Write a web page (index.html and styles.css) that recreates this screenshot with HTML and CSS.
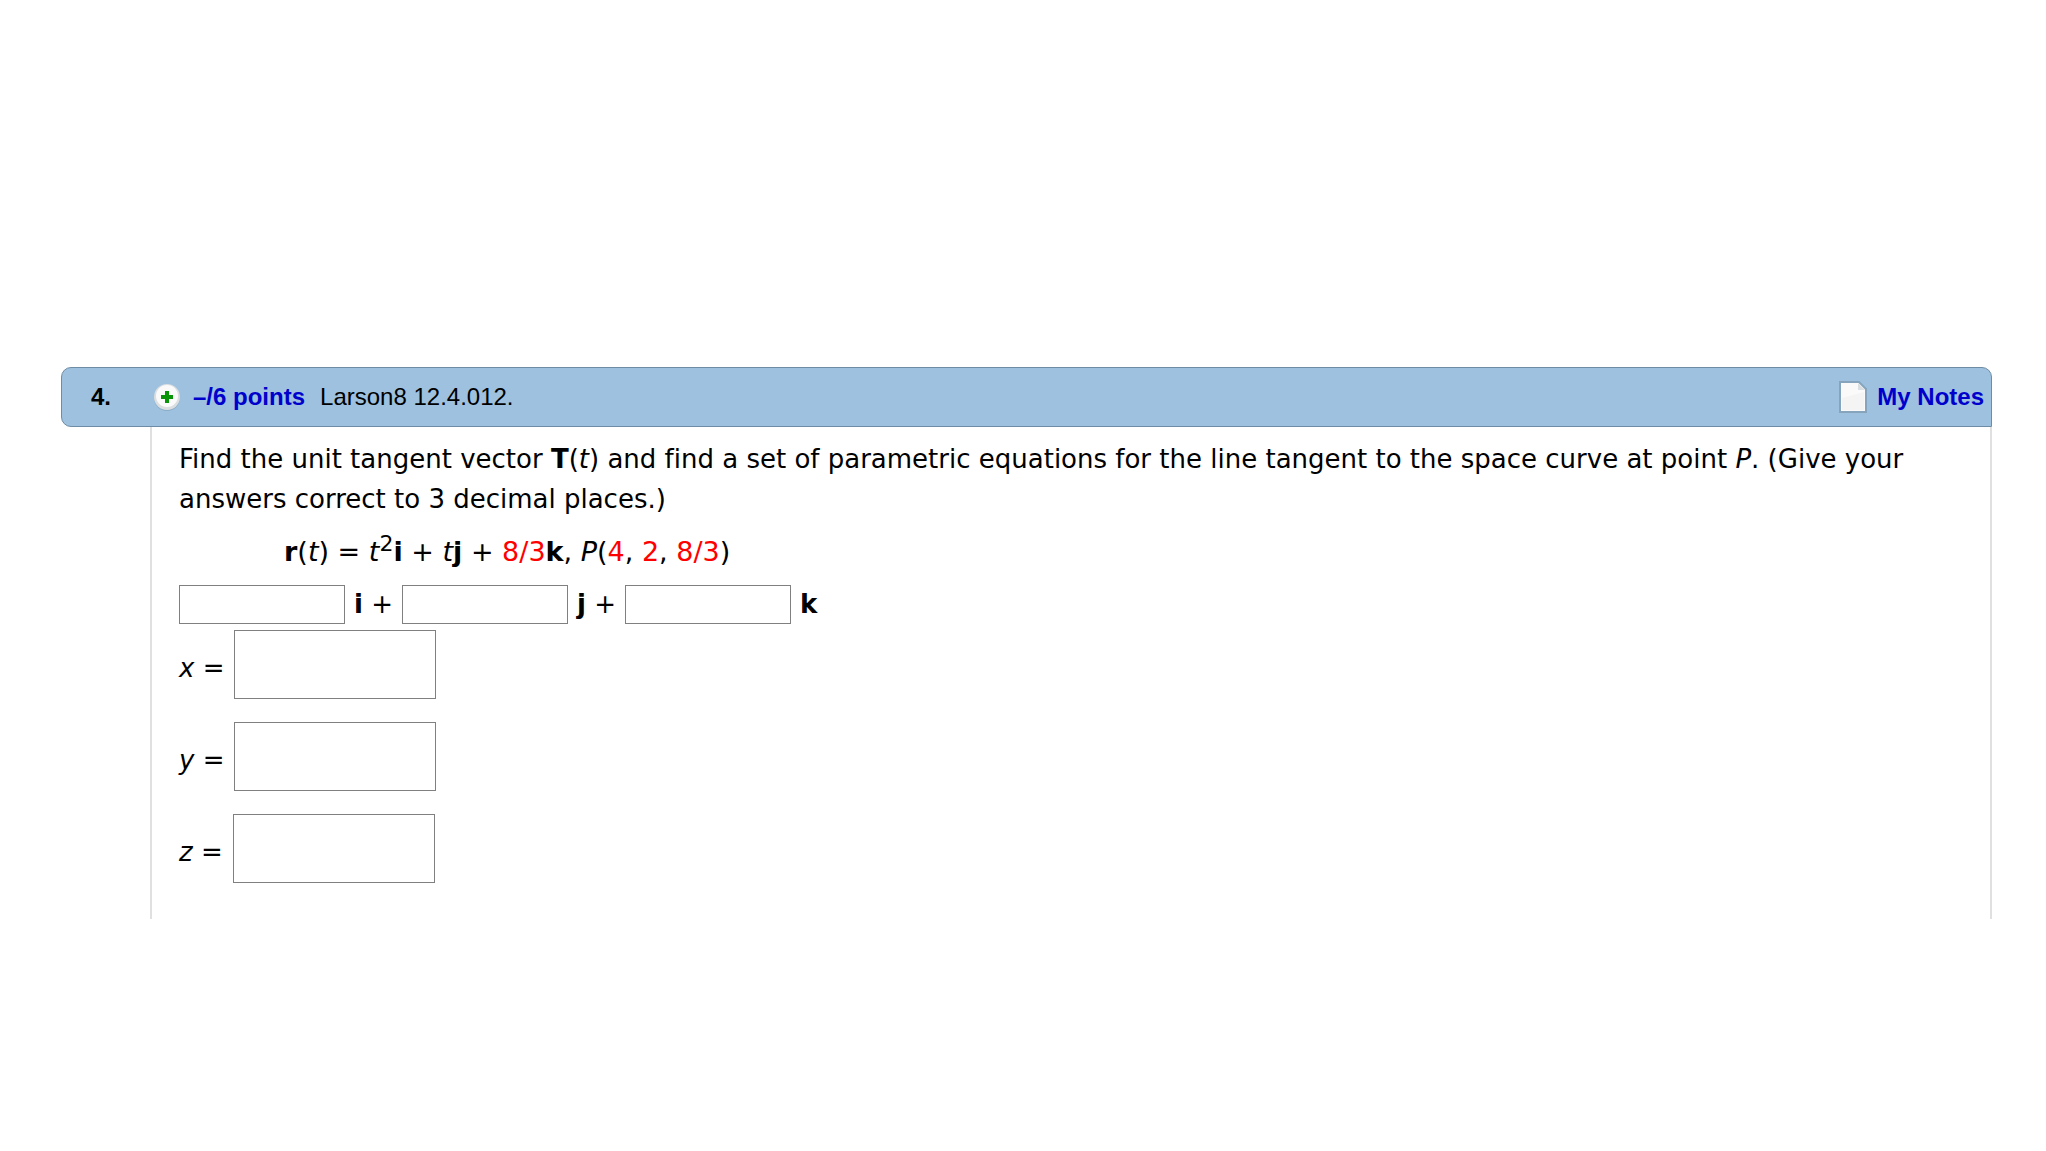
FILE: index.html
```
<!DOCTYPE html>
<html lang="en">
<head>
    <meta charset="UTF-8">
    <title>Larson8 12.4.012</title>
    <link rel="stylesheet" href="styles.css">
</head>
<body>
<div class="question">
    <div class="header">
        <span class="number">4.</span>
        <button class="expand" aria-label="Expand">
            <svg width="28" height="28" viewBox="0 0 28 28">
                <circle cx="14" cy="15" r="13" fill="#7f9fb8" opacity="0.6"/>
                <circle cx="14" cy="14" r="13" fill="#dcdfe1"/>
                <circle cx="14" cy="13" r="11" fill="#fafafa"/>
                <path d="M12 8h4v4h4v4h-4v4h-4v-4h-4v-4h4z" fill="#0a940a"/>
            </svg>
        </button>
        <a class="points" href="#">–/6 points</a>
        <span class="source">Larson8 12.4.012.</span>
        <a class="notes" href="#">
            <svg width="28" height="32" viewBox="0 0 28 32">
                <path d="M1 1h19l7 7v23H1z" fill="#fafafa" stroke="#86a5bd" stroke-width="2"/>
                <path d="M3 29V17L25 11v18z" fill="#f4f4f4"/>
                <path d="M19 2v7h7z" fill="#dcdfe1"/>
            </svg>
            My Notes
        </a>
    </div>
    <div class="content">
        <p class="text">Find the unit tangent vector <b>T</b>(<i>t</i>) and find a set of parametric equations for the line tangent to the space curve at point <i>P</i>. (Give your answers correct to 3 decimal places.)</p>
        <p class="equation"><b>r</b>(<i>t</i>) = <i>t</i><sup>2</sup><b>i</b> + <i>t</i><b>j</b> + <span class="red">8/3</span><b>k</b>, <i>P</i>(<span class="red">4</span>, <span class="red">2</span>, <span class="red">8/3</span>)</p>
        <div class="vector">
            <input type="text" id="ti"/>
            <label for="ti"><b>i</b> +</label>
            <input type="text" id="tj"/>
            <label for="tj"><b>j</b> +</label>
            <input type="text" id="tk"/>
            <label for="tk"><b>k</b></label>
        </div>
        <div class="answers">
            <div class="row">
                <label for="x"><i>x</i> =</label>
                <input type="text" id="x"/>
            </div>
            <div class="row">
                <label for="y"><i>y</i> =</label>
                <input type="text" id="y"/>
            </div>
            <div class="row">
                <label for="z"><i>z</i> =</label>
                <input type="text" id="z"/>
            </div>
        </div>
    </div>
</div>
</body>
</html>
```
FILE: styles.css
```
* {
    box-sizing: border-box;
}

body {
    margin: 0;
    padding: 367px 54px 0 61px;
    background-color: #fff;
    color: #000;
    font-family: Verdana, "DejaVu Sans", sans-serif;
    font-size: 26px;
    font-variant-ligatures: none;
    line-height: 40px;
}

.header {
    display: flex;
    align-items: center;
    height: 60px;
    padding: 0 7px 0 29px;
    background-color: #9dc1df;
    border: 1px solid #6e8ca3;
    border-radius: 10px 10px 0 10px;
    font-family: Arial, "Liberation Sans", sans-serif;
    font-size: 24px;
}

.number {
    width: 62px;
    font-weight: bold;
}

.expand {
    display: flex;
    margin: 0 12px 0 0;
    padding: 0;
    border: none;
    background: none;
    cursor: pointer;
}

.points, .notes {
    color: #0000cc;
    font-weight: bold;
    text-decoration: none;
}

.source {
    margin-left: 15px;
}

.notes {
    display: flex;
    align-items: center;
    gap: 10px;
    margin-left: auto;
}

.content {
    margin-left: 89px;
    padding: 12px 60px 36px 27px;
    border-left: 2px solid #e0e0e0;
    border-right: 2px solid #e0e0e0;
}

.text {
    margin: 0;
}

.equation {
    margin: 13px 0 12px;
    padding-left: 105px;
    font-size: 27px;
}

sup {
    font-size: 22px;
    line-height: 0;
}

.red {
    color: #f00;
}

.vector {
    display: flex;
    align-items: center;
    gap: 9px;
}

input {
    width: 166px;
    height: 39px;
    padding: 0 6px;
    border: 1px solid #808080;
    background-color: #fff;
    font: inherit;
}

.answers {
    display: flex;
    flex-direction: column;
    gap: 23px;
    margin-top: 6px;
}

.row {
    display: flex;
    align-items: center;
    gap: 10px;
}

.row label {
    padding-top: 6px;
}

.row input {
    width: 202px;
    height: 69px;
}
```
